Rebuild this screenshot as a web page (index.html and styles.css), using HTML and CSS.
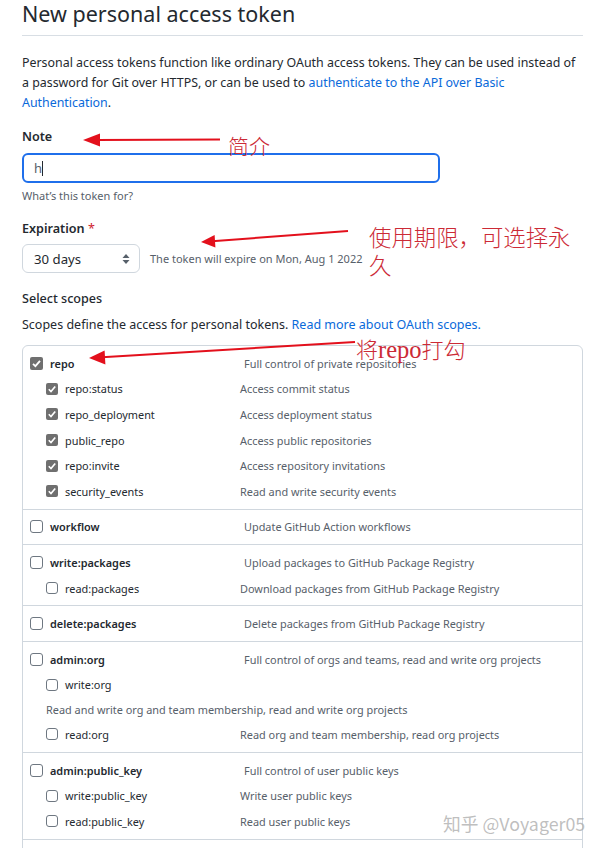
FILE: index.html
```html
<!DOCTYPE html>
<html lang="en">
<head>
<meta charset="utf-8">
<title>New personal access token</title>
<link rel="stylesheet" href="styles.css">
</head>
<body>
<div class="page">
  <h1 class="title">New personal access token</h1>
  <p class="intro">Personal access tokens function like ordinary OAuth access tokens. They can be used instead of a password for Git over HTTPS, or can be used to <a href="#">authenticate to the API over Basic Authentication</a>.</p>

  <div class="field">
    <div class="label">Note</div>
    <div class="input"><span>h</span><span class="caret"></span></div>
    <div class="hint">What’s this token for?</div>
  </div>

  <div class="field">
    <div class="label">Expiration <span class="req">*</span></div>
    <div class="exp-row">
      <div class="select"><span>30 days</span>
        <svg class="updown" width="8" height="12" viewBox="0 0 8 12"><path d="M4 1 L7.5 5 H0.5 Z M4 11 L0.5 7 H7.5 Z" fill="#57606a"/></svg>
      </div>
      <span class="exp-note">The token will expire on Mon, Aug 1 2022</span>
    </div>
  </div>

  <div class="field">
    <div class="label scopes-label">Select scopes</div>
    <p class="scopes-intro">Scopes define the access for personal tokens. <a href="#">Read more about OAuth scopes.</a></p>

    <div class="scopes">
      <div class="group first">
        <div class="row top"><span class="cb on"><svg viewBox="0 0 13 13"><path d="M3 6.8 L5.4 9.2 L10 3.8" fill="none" stroke="#fff" stroke-width="1.8"/></svg></span><span class="name">repo</span><span class="desc">Full control of private repositories</span></div>
        <div class="row sub"><span class="cb on"><svg viewBox="0 0 13 13"><path d="M3 6.8 L5.4 9.2 L10 3.8" fill="none" stroke="#fff" stroke-width="1.8"/></svg></span><span class="name">repo:status</span><span class="desc">Access commit status</span></div>
        <div class="row sub"><span class="cb on"><svg viewBox="0 0 13 13"><path d="M3 6.8 L5.4 9.2 L10 3.8" fill="none" stroke="#fff" stroke-width="1.8"/></svg></span><span class="name">repo_deployment</span><span class="desc">Access deployment status</span></div>
        <div class="row sub"><span class="cb on"><svg viewBox="0 0 13 13"><path d="M3 6.8 L5.4 9.2 L10 3.8" fill="none" stroke="#fff" stroke-width="1.8"/></svg></span><span class="name">public_repo</span><span class="desc">Access public repositories</span></div>
        <div class="row sub"><span class="cb on"><svg viewBox="0 0 13 13"><path d="M3 6.8 L5.4 9.2 L10 3.8" fill="none" stroke="#fff" stroke-width="1.8"/></svg></span><span class="name">repo:invite</span><span class="desc">Access repository invitations</span></div>
        <div class="row sub"><span class="cb on"><svg viewBox="0 0 13 13"><path d="M3 6.8 L5.4 9.2 L10 3.8" fill="none" stroke="#fff" stroke-width="1.8"/></svg></span><span class="name">security_events</span><span class="desc">Read and write security events</span></div>
      </div>

      <div class="group">
        <div class="row top"><span class="cb"></span><span class="name">workflow</span><span class="desc">Update GitHub Action workflows</span></div>
      </div>

      <div class="group">
        <div class="row top"><span class="cb"></span><span class="name">write:packages</span><span class="desc">Upload packages to GitHub Package Registry</span></div>
        <div class="row sub"><span class="cb"></span><span class="name">read:packages</span><span class="desc">Download packages from GitHub Package Registry</span></div>
      </div>

      <div class="group">
        <div class="row top"><span class="cb"></span><span class="name">delete:packages</span><span class="desc">Delete packages from GitHub Package Registry</span></div>
      </div>

      <div class="group">
        <div class="row top"><span class="cb"></span><span class="name">admin:org</span><span class="desc">Full control of orgs and teams, read and write org projects</span></div>
        <div class="row sub"><span class="cb"></span><span class="name">write:org</span></div>
        <div class="row wrap">Read and write org and team membership, read and write org projects</div>
        <div class="row sub"><span class="cb"></span><span class="name">read:org</span><span class="desc">Read org and team membership, read org projects</span></div>
      </div>

      <div class="group">
        <div class="row top"><span class="cb"></span><span class="name">admin:public_key</span><span class="desc">Full control of user public keys</span></div>
        <div class="row sub"><span class="cb"></span><span class="name">write:public_key</span><span class="desc">Write user public keys</span></div>
        <div class="row sub"><span class="cb"></span><span class="name">read:public_key</span><span class="desc">Read user public keys</span></div>
      </div>

      <div class="group">
        <div class="row top"><span class="cb"></span><span class="name">admin:repo_hook</span><span class="desc">Full control of repository hooks</span></div>
      </div>
    </div>
  </div>
</div>

<svg class="annot" width="600" height="848" viewBox="0 0 600 848">
  <line x1="220" y1="139.5" x2="96" y2="140" stroke="#e3101c" stroke-width="2"/>
  <polygon points="83,140 100,133.5 100,146.5" fill="#e3101c"/>
  <line x1="348" y1="231" x2="212" y2="241.2" stroke="#e3101c" stroke-width="2"/>
  <polygon points="201,242 215.4,247.5 214.6,235" fill="#e3101c"/>
  <line x1="355" y1="342" x2="102" y2="357.2" stroke="#e3101c" stroke-width="2"/>
  <polygon points="89,358 105.4,364.5 104.6,350.5" fill="#e3101c"/>
</svg>
<div class="cn cn-note">简介</div>
<div class="cn cn-exp">使用期限，可选择永<br>久</div>
<div class="cn cn-repo">将<span class="latin">repo</span>打勾</div>
<div class="watermark">知乎 @Voyager05</div>
</body>
</html>
```

FILE: styles.css
```css
html, body {
  margin: 0;
  padding: 0;
  background: #ffffff;
}
body {
  position: relative;
  width: 600px;
  height: 848px;
  overflow: hidden;
  font-family: "Noto Sans", "Open Sans", "Liberation Sans", sans-serif;
  color: #24292f;
}
.page {
  padding: 0 17px 0 22px;
}
.title {
  margin: 0;
  font-size: 21.5px;
  font-weight: 400;
  line-height: 28px;
  padding-bottom: 7px;
  border-bottom: 1px solid #d8dee4;
  color: #24292f;
}
.intro {
  margin: 17px 0 0;
  font-size: 12.4px;
  line-height: 20px;
}
a {
  color: #0969da;
  text-decoration: none;
}
.field {
  margin-top: 14px;
}
.label {
  font-size: 12.6px;
  font-weight: 600;
  line-height: 20px;
}
.req {
  color: #cf222e;
  font-weight: 400;
}
.input {
  margin-top: 6px;
  width: 418px;
  height: 30px;
  box-sizing: border-box;
  border: 2px solid #1f6feb;
  border-radius: 6px;
  display: flex;
  align-items: center;
  padding-left: 10px;
  font-size: 13px;
  color: #57606a;
}
.caret {
  display: inline-block;
  width: 1px;
  height: 15px;
  background: #24292f;
}
.hint {
  margin-top: 4px;
  font-size: 11px;
  line-height: 18px;
  color: #57606a;
}
.exp-row {
  margin-top: 5px;
  display: flex;
  align-items: center;
}
.select {
  width: 118px;
  height: 29px;
  box-sizing: border-box;
  border: 1px solid #d0d7de;
  border-radius: 6px;
  display: flex;
  align-items: center;
  justify-content: space-between;
  padding: 0 9px 0 11px;
  font-size: 13.2px;
  color: #24292f;
  background: #ffffff;
}
.exp-note {
  margin-left: 10px;
  font-size: 11px;
  color: #57606a;
}
.scopes-label {
  margin-top: 16px;
  font-weight: 500;
}
.scopes-intro {
  margin: 6px 0 0;
  font-size: 12.5px;
  line-height: 20px;
}
.scopes {
  margin-top: 10px;
  border: 1px solid #d0d7de;
  border-radius: 6px;
  font-size: 10.9px;
}
.group {
  padding: 4.5px 0;
  border-top: 1px solid #d0d7de;
}
.group.first {
  border-top: none;
}
.row {
  display: flex;
  align-items: center;
  height: 25.6px;
}
.row.top {
  padding-left: 7px;
}
.row.sub {
  padding-left: 23px;
}
.row.wrap {
  padding-left: 23px;
  height: 24px;
  color: #57606a;
}
.cb {
  flex: none;
  width: 13px;
  height: 13px;
  box-sizing: border-box;
  border: 1px solid #6e7781;
  border-radius: 3px;
  background: #ffffff;
  margin-right: 7px;
}
.sub .cb {
  width: 12px;
  height: 12px;
}
.cb.on {
  border: none;
  background: #6f6f6f;
  border-radius: 2px;
}
.cb svg {
  display: block;
  width: 100%;
  height: 100%;
}
.top .name {
  width: 194px;
  font-weight: 600;
  color: #24292f;
}
.sub .name {
  width: 175px;
  color: #24292f;
}
.desc {
  color: #57606a;
}
.annot {
  position: absolute;
  left: 0;
  top: 0;
  pointer-events: none;
}
.cn {
  position: absolute;
  color: #cc2a36;
  font-family: "Noto Sans CJK SC", sans-serif;
  font-weight: 300;
  font-size: 21px;
  line-height: 28px;
  white-space: nowrap;
}
.cn .latin {
  font-family: "Liberation Serif", serif;
  font-size: 24.5px;
}
.cn-note {
  left: 228px;
  top: 131px;
}
.cn-exp {
  left: 369px;
  top: 222px;
  font-size: 22.4px;
}
.cn-repo {
  left: 356px;
  top: 334px;
  font-size: 22px;
}
.watermark {
  position: absolute;
  left: 443px;
  top: 811px;
  font-family: "Noto Sans CJK SC", "Noto Sans", sans-serif;
  font-size: 17.8px;
  line-height: 24px;
  color: rgba(170, 170, 170, 0.75);
  white-space: nowrap;
}
```
